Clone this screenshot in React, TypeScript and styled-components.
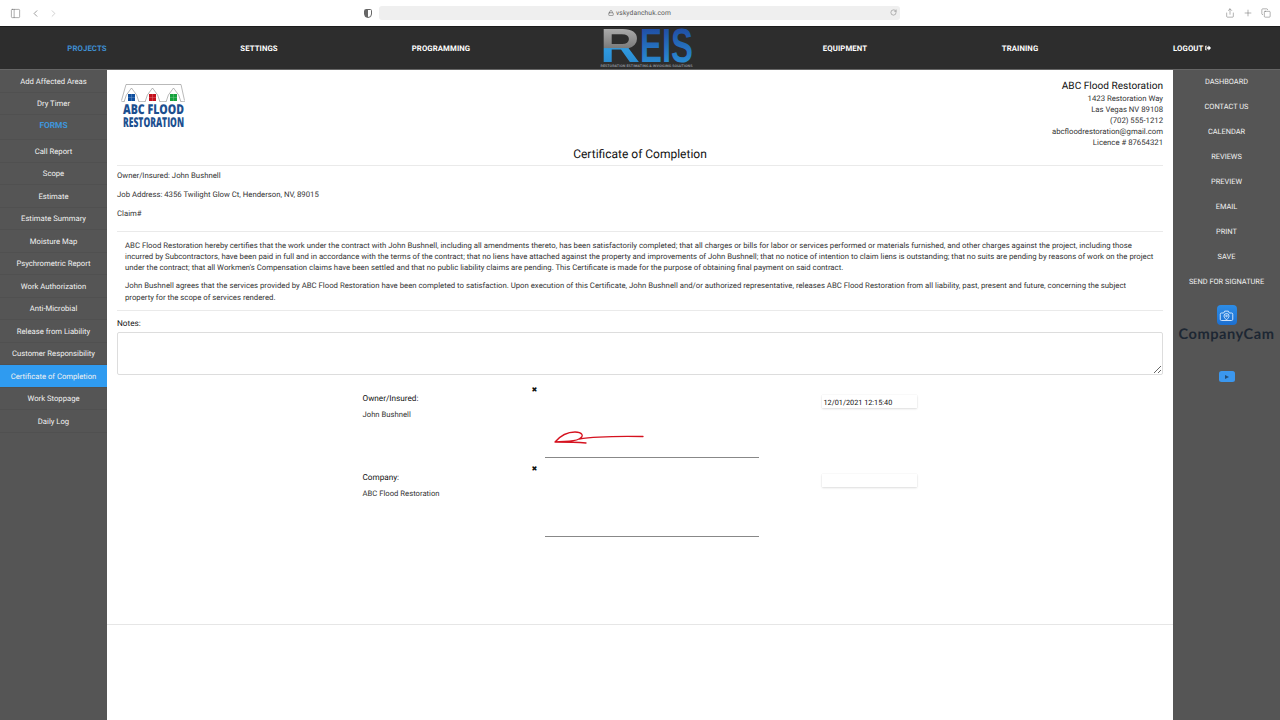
import React from "react";
import styled, { createGlobalStyle } from "styled-components";
import { PanelLeft, ChevronLeft, ChevronRight, Share, Plus, Copy, RotateCw, Lock } from "lucide-react";
import { FaSignOutAlt } from "react-icons/fa";

const Global = createGlobalStyle`
  html, body { margin: 0; padding: 0; height: 720px; overflow: hidden; background: #fff; }
  body { font-family: Roboto, "Liberation Sans", sans-serif; color: #222; text-rendering: geometricPrecision; }
  * { box-sizing: border-box; }
`;
const Page = styled.div`display: flex; flex-direction: column; width: 1280px; height: 720px; overflow: hidden;`;
const BrowserBar = styled.div`
  height: 26px; flex: none; background: #fff; display: grid; grid-template-columns: 379px 521px 1fr; align-items: center; position: relative;
`;
const BarLeft = styled.div`display: flex; align-items: center; padding-left: 10px; gap: 9px; color: #666; position: relative;`;
const Shield = styled.div`
  position: absolute; left: 364px; top: 1px; width: 8px; height: 9px; border-radius: 2px 2px 5px 5px; border: 1px solid #666;
  background: linear-gradient(90deg, #666 50%, #fff 50%);
`;
const AddressBar = styled.div`
  height: 14px; border-radius: 3px; background: #efefef; display: flex; align-items: center; justify-content: center; position: relative;
  font-size: 6.7px; color: #555; gap: 2px; letter-spacing: .1px;
`;
const Reload = styled.span`position: absolute; right: 3px; top: 3px; color: #888; display: flex;`;
const BarRight = styled.div`display: flex; justify-content: flex-end; align-items: center; gap: 8px; padding-right: 9px; color: #666;`;

const Nav = styled.nav`
  height: 44px; flex: none; background: #2d2d2d; border-top: 1px solid #1c1c1c; border-bottom: 1px solid #666;
  display: grid; grid-template-columns: 174px 170px 194px 218px 178px 172px 172px; align-items: center; justify-items: center;
`;
const NavItem = styled.a<{ $active?: boolean }>`
  font-size: 7.75px; font-weight: 700; color: ${p => p.$active ? "#3f8fd2" : "#fff"}; letter-spacing: .1px; display: flex; align-items: center; gap: 1.5px;
`;
const Main = styled.div`flex: 1; display: grid; grid-template-columns: 107px 1066px 107px; min-height: 0;`;
const Side = styled.aside`background: #555; display: flex; flex-direction: column; height: 100%;`;
const SideItem = styled.div<{ $active?: boolean; $heading?: boolean }>`
  height: ${p => p.$heading ? "25px" : "22.5px"}; padding: 1px 0 ${p => p.$heading ? "3px" : "0"}; flex: none; display: flex; align-items: center; justify-content: center; font-size: ${p => p.$heading ? "8.4px" : "7.7px"}; white-space: nowrap;
  border-bottom: 1px solid #505050;
  color: ${p => p.$heading ? "#3f96dc" : "#f2f2f2"};
  background: ${p => p.$active ? "#2f9bf0" : "transparent"};
  font-weight: ${p => p.$heading ? 700 : 400};
`;
const RightList = styled.div`display: flex; flex-direction: column; margin-top: -1px;`;
const RightItem = styled.div`
  height: 25px; flex: none; display: flex; align-items: center; justify-content: center; font-size: 7.4px; color: #f0f0f0; white-space: nowrap;
`;
const CamBlock = styled.div`display: flex; flex-direction: column; align-items: center; margin-top: 11px;`;
const CamIcon = styled.div`width: 20px; height: 20px; border-radius: 4px; background: linear-gradient(#2d8de6, #1c6fd0); display: flex; align-items: center; justify-content: center; color: #cfe6ff;`;
const CamName = styled.div`font-family: Lato, sans-serif; font-weight: 700; font-size: 14.6px; color: #1d2733; letter-spacing: .5px; line-height: 15px; margin-top: 2px;`;
const Tube = styled.div`width: 16px; height: 11px; border-radius: 2.5px; background: #3b97ee; margin-top: 29px; display: flex; align-items: center; justify-content: center;
  &::after { content: ""; border-left: 4px solid #234e78; border-top: 2.5px solid transparent; border-bottom: 2.5px solid transparent; }
`;

const Content = styled.main`padding: 0 10px; background: #fff; position: relative; display: flex; flex-direction: column;`;
const Head = styled.div`display: flex; justify-content: space-between; padding-top: 11px; height: 78px;`;
const LogoWrap = styled.div`padding-left: 4px; padding-top: 3px;`;
const Company = styled.div`text-align: right; font-size: 7.75px; line-height: 11px; color: #333;`;
const CompanyName = styled.div`font-size: 10.1px; color: #111; line-height: 12px;`;
const Title = styled.h1`margin: -2px 0 3px; text-align: center; font-size: 12px; line-height: 16px; font-weight: 400; color: #111;`;
const Rule = styled.div`height: 1px; background: #eaeaea; flex: none;`;
const InfoBlock = styled.div`padding-top: 4px; padding-bottom: 12px; display: flex; flex-direction: column; gap: 8px;`;
const Info = styled.div`font-size: 7.75px; line-height: 11px; color: #333;`;
const Legal = styled.div`padding: 7.5px 8px 6.5px; display: flex; flex-direction: column; gap: 6.5px;`;
const Para = styled.p`margin: 0; font-size: 7.78px; line-height: 11.45px; color: #333;`;
const NotesLabel = styled.div`font-size: 8.2px; line-height: 11px; color: #111; margin-top: 8px;`;
const Notes = styled.textarea`display: block; width: 100%; height: 43px; margin-top: 2px; border: 1px solid #ddd; border-radius: 2px; background: #fff; flex: none;`;
const SigRow = styled.div`display: grid; grid-template-columns: 170px 12px 214px 63.5px 95px; height: 79px; margin-left: 245.5px; width: 600px;`;
const SigList = styled.div`margin-top: 10px;`;
const Who = styled.div`padding-top: 9px; font-size: 8.2px; color: #111;`;
const WhoLabel = styled.div`line-height: 11px; margin-bottom: 4px;`;
const WhoName = styled.div`line-height: 11px; color: #333; font-size: 7.7px;`;
const Close = styled.div`font-size: 7px; font-family: "DejaVu Sans", sans-serif; color: #111; margin-left: -1px; line-height: 10px;`;
const SigArea = styled.div`height: 73px; border-bottom: 1px solid #888; padding-left: 8px; display: flex; align-items: flex-end;`;
const DateBox = styled.div`height: 13px; margin-top: 10px; font-size: 7.3px; line-height: 15px; padding-left: 1.5px; color: #111; box-shadow: 0 1px 2px rgba(0,0,0,.12), 0 0 1px rgba(0,0,0,.1);`;
const Footer = styled.div`margin: 81px -10px 0; height: 1px; background: #e6e6e6;`;

const left = ["Call Report","Scope","Estimate","Estimate Summary","Moisture Map","Psychrometric Report","Work Authorization","Anti-Microbial","Release from Liability","Customer Responsibility"];
const right = ["DASHBOARD","CONTACT US","CALENDAR","REVIEWS","PREVIEW","EMAIL","PRINT","SAVE","SEND FOR SIGNATURE"];

const ReisLogo = () => (
  <svg width="94" height="42" viewBox="0 0 94 42" style={{ display: "block", overflow: "visible" }}>
    <defs>
      <linearGradient id="rg" x1="0" y1="0" x2="0" y2="1"><stop offset="0" stopColor="#c0c0c0" /><stop offset=".52" stopColor="#7c7c7c" /><stop offset=".54" stopColor="#2f9ae0" /><stop offset="1" stopColor="#2580c4" /></linearGradient>
      <linearGradient id="bg" x1="0" y1="0" x2="0" y2="1"><stop offset="0" stopColor="#1d3f9a" /><stop offset="1" stopColor="#2d9ee0" /></linearGradient>
    </defs>
    <text x="0" y="35" fontFamily="'Liberation Sans', sans-serif" fontWeight="700" fontSize="48" fill="url(#rg)" textLength="40" lengthAdjust="spacingAndGlyphs">R</text>
    <text x="40" y="35" fontFamily="'Liberation Sans', sans-serif" fontWeight="700" fontSize="48" fill="url(#bg)" textLength="53" lengthAdjust="spacingAndGlyphs">EIS</text>
    <text x="0.5" y="39.5" fontFamily="Roboto, sans-serif" fontWeight="700" fontSize="3.4" fill="#8a8f96" textLength="92" lengthAdjust="spacingAndGlyphs">RESTORATION ESTIMATING &amp; INVOICING SOLUTIONS</text>
  </svg>
);
const House = ({ x, c }: { x: number; c: string }) => (
  <g>
    <path d={`M${x} 18 Q${x + 1} 11 ${x + 7.5} 4 Q${x + 14} 11 ${x + 15} 18`} fill="#fff" stroke="#8a8a8a" strokeWidth=".6" />
    <rect x={x + 4} y="10" width="7" height="7" fill={c} />
    <path d={`M${x + 7.5} 10v7M${x + 4} 13.5h7`} stroke="#fff" strokeWidth=".4" opacity=".5" />
  </g>
);
const AbcLogo = () => (
  <svg width="66" height="46" viewBox="0 0 66 46" style={{ display: "block", overflow: "visible" }}>
    <path d="M0.5 16.5 L5 .5 H60 L63.5 16.5" fill="none" stroke="#8a8a8a" strokeWidth=".6" />
    <path d="M0.5 17.5H64" stroke="#8a8a8a" strokeWidth=".5" />
    <House x={3} c="#0f4f9f" />
    <House x={24} c="#c4101c" />
    <House x={45} c="#15a23c" />
    <text x="32.5" y="30" textAnchor="middle" fontFamily="'Open Sans', sans-serif" fontWeight="800" fontSize="13.5" fill="#1c4f8f" textLength="61" lengthAdjust="spacingAndGlyphs">ABC FLOOD</text>
    <text x="32.5" y="43" textAnchor="middle" fontFamily="'Open Sans', sans-serif" fontWeight="800" fontSize="13.5" fill="#1c4f8f" textLength="61" lengthAdjust="spacingAndGlyphs">RESTORATION</text>
  </svg>
);
const CamGlyph = () => (
  <svg width="15" height="15" viewBox="0 0 24 24" fill="none" stroke="#d6e9ff" strokeWidth="1.5">
    <path d="M4 8h3.5L9 5h6l1.5 3H20a2 2 0 0 1 2 2v8a2 2 0 0 1-2 2H4a2 2 0 0 1-2-2v-8a2 2 0 0 1 2-2z" />
    <path d="M12 19c-2.5-2.5-4-4.2-4-6.2a4 4 0 0 1 8 0c0 2-1.500 3.700-4 6.200z" />
    <circle cx="12" cy="12.800" r="1.300" />
  </svg>
);

export default function App() {
  return (
    <Page>
      <Global />
      <BrowserBar>
        <BarLeft>
          <PanelLeft size={11} strokeWidth={1.2} />
          <ChevronLeft size={11} strokeWidth={1.4} />
          <ChevronRight size={11} strokeWidth={1.2} color="#aaa" style={{ marginLeft: -2.5 }} />
          <Shield />
        </BarLeft>
        <AddressBar>
          <Lock size={6} />vskydanchuk.com
          <Reload><RotateCw size={7} /></Reload>
        </AddressBar>
        <BarRight>
          <Share size={10} strokeWidth={1.2} />
          <Plus size={10} strokeWidth={1.2} />
          <Copy size={10} strokeWidth={1.2} />
        </BarRight>
      </BrowserBar>
      <Nav>
        <NavItem $active>PROJECTS</NavItem>
        <NavItem>SETTINGS</NavItem>
        <NavItem>PROGRAMMING</NavItem>
        <ReisLogo />
        <NavItem>EQUIPMENT</NavItem>
        <NavItem>TRAINING</NavItem>
        <NavItem>LOGOUT <FaSignOutAlt size={6} /></NavItem>
      </Nav>
      <Main>
        <Side>
          <SideItem>Add Affected Areas</SideItem>
          <SideItem>Dry Timer</SideItem>
          <SideItem $heading>FORMS</SideItem>
          {left.map(t => <SideItem key={t}>{t}</SideItem>)}
          <SideItem $active>Certificate of Completion</SideItem>
          <SideItem>Work Stoppage</SideItem>
          <SideItem>Daily Log</SideItem>
        </Side>
        <Content>
          <Head>
            <LogoWrap><AbcLogo /></LogoWrap>
            <Company>
              <CompanyName>ABC Flood Restoration</CompanyName>
              <div>1423 Restoration Way</div>
              <div>Las Vegas NV 89108</div>
              <div>(702) 555-1212</div>
              <div>abcfloodrestoration@gmail.com</div>
              <div>Licence # 87654321</div>
            </Company>
          </Head>
          <Title>Certificate of Completion</Title>
          <Rule />
          <InfoBlock>
            <Info>Owner/Insured: John Bushnell</Info>
            <Info>Job Address: 4356 Twilight Glow Ct, Henderson, NV, 89015</Info>
            <Info>Claim#</Info>
          </InfoBlock>
          <Rule />
          <Legal>
            <Para>ABC Flood Restoration hereby certifies that the work under the contract with John Bushnell, including all amendments thereto, has been satisfactorily completed; that all charges or bills for labor or services performed or materials furnished, and other charges against the project, including those incurred by Subcontractors, have been paid in full and in accordance with the terms of the contract; that no liens have attached against the property and improvements of John Bushnell; that no notice of intention to claim liens is outstanding; that no suits are pending by reasons of work on the project under the contract; that all Workmen's Compensation claims have been settled and that no public liability claims are pending. This Certificate is made for the purpose of obtaining final payment on said contract.</Para>
            <Para>John Bushnell agrees that the services provided by ABC Flood Restoration have been completed to satisfaction. Upon execution of this Certificate, John Bushnell and/or authorized representative, releases ABC Flood Restoration from all liability, past, present and future, concerning the subject property for the scope of services rendered.</Para>
          </Legal>
          <Rule />
          <NotesLabel>Notes:</NotesLabel>
          <Notes />
          <SigList>
            <SigRow>
              <Who><WhoLabel>Owner/Insured:</WhoLabel><WhoName>John Bushnell</WhoName></Who>
              <Close>✖</Close>
              <SigArea>
                <svg width="92" height="24" viewBox="0 0 92 24" style={{ marginBottom: 6, overflow: "visible" }}>
                  <path d="M2 15 C8 8 16 5 22 5 C29 5 32 9 26 12 C20 15 14 14 2 15 C12 15 22 15 33 16 M26 12 C38 10 60 9 90 9.500" fill="none" stroke="#d5121f" strokeWidth="1.300" strokeLinecap="round" />
                </svg>
              </SigArea>
              <span />
              <DateBox>12/01/2021 12:15:40</DateBox>
            </SigRow>
            <SigRow>
              <Who><WhoLabel>Company:</WhoLabel><WhoName>ABC Flood Restoration</WhoName></Who>
              <Close>✖</Close>
              <SigArea />
              <span />
              <DateBox />
            </SigRow>
          </SigList>
          <Footer />
        </Content>
        <Side>
          <RightList>{right.map(t => <RightItem key={t}>{t}</RightItem>)}</RightList>
          <CamBlock>
            <CamIcon><CamGlyph /></CamIcon>
            <CamName>CompanyCam</CamName>
            <Tube />
          </CamBlock>
        </Side>
      </Main>
    </Page>
  );
}
